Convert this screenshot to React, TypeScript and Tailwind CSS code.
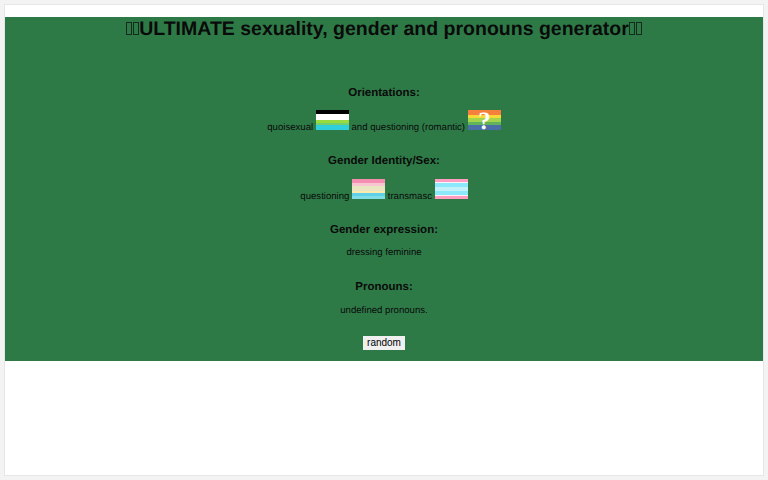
import React from 'react';

const Flag = ({ stripes, children }: { stripes: [string, number][]; children?: React.ReactNode }) => {
  let y = 0;
  return (
    <svg width="33" height="20" viewBox="0 0 33 20" className="inline-block align-baseline">
      {stripes.map(([color, h], i) => {
        const rect = <rect key={i} x="0" y={y} width="33" height={h} fill={color} />;
        y += h;
        return rect;
      })}
      {children}
    </svg>
  );
};

// missing-glyph boxes the title shows on both sides
const Tofu = () => <span className="mx-[0.5px] inline-block h-[13px] w-[6px] border border-[#0a0a0a]/70 align-baseline" />;

const quoisexual: [string, number][] = [['#000000', 4], ['#ffffff', 6], ['#98dc40', 3], ['#74cf6a', 2], ['#2fd0dc', 5]];
const questioning: [string, number][] = [['#f5803c', 5], ['#f7d936', 3], ['#a4d44c', 4], ['#62b45c', 3], ['#4a6fa8', 5]];
const genderQuestioning: [string, number][] = [['#f58fb0', 4], ['#f7c6d2', 3], ['#e8e6c0', 5], ['#fbe9b0', 2], ['#5fd0e6', 3], ['#7fdce6', 3]];
const transmasc: [string, number][] = [['#ff9ec0', 3], ['#fff0f5', 1], ['#8ce8fb', 4], ['#c4f2fb', 4], ['#8ce8fb', 4], ['#fff0f5', 1], ['#ff9ec0', 3]];

const Heading = ({ children }: { children: React.ReactNode }) => (
  <h2 className="text-[11.5px] font-bold leading-[14px] text-[#0a0a0a]">{children}</h2>
);

export default function App() {
  return (
    <div className="h-[480px] bg-[#f3f3f3] p-[4px] font-['Liberation_Sans',Arial,sans-serif] [text-rendering:geometricPrecision]">
      <div className="h-full border border-[#e6e6e6] bg-white pt-[12px]">
        <div className="h-[344px] bg-[#2e7a47] text-center text-[#0a0a0a]">
          <h1 className="pt-[2px] text-[19.5px] leading-[20px] font-bold">
            <Tofu /><Tofu />ULTIMATE sexuality, gender and pronouns generator<Tofu /><Tofu />
          </h1>

          <div className="pt-[47px]">
            <Heading>Orientations:</Heading>
            <p className="mt-[10px] text-[9.6px] leading-[20px]">
              quoisexual <Flag stripes={quoisexual} /> and questioning (romantic){' '}
              <Flag stripes={questioning}>
                <text x="16.5" y="19" fontSize="25" fontWeight="bold" textAnchor="middle" fill="#ffffff" fontFamily="Liberation Serif, serif">?</text>
              </Flag>
            </p>
          </div>

          <div className="pt-[16px]">
            <Heading>Gender Identity/Sex:</Heading>
            <p className="mt-[11px] text-[9.6px] leading-[20px]">
              questioning <Flag stripes={genderQuestioning} /> transmasc <Flag stripes={transmasc} />
            </p>
          </div>

          <div className="pt-[16px]">
            <Heading>Gender expression:</Heading>
            <p className="mt-[10px] text-[9.6px] leading-[12px]">dressing feminine</p>
          </div>

          <div className="pt-[21px]">
            <Heading>Pronouns:</Heading>
            <p className="mt-[11px] text-[9.6px] leading-[12px]">undefined pronouns.</p>
          </div>

          <button className="mt-[19px] h-[14px] w-[42px] bg-[#f0f0f0] text-[10px] leading-[14px] text-black">random</button>
        </div>
      </div>
    </div>
  );
}
